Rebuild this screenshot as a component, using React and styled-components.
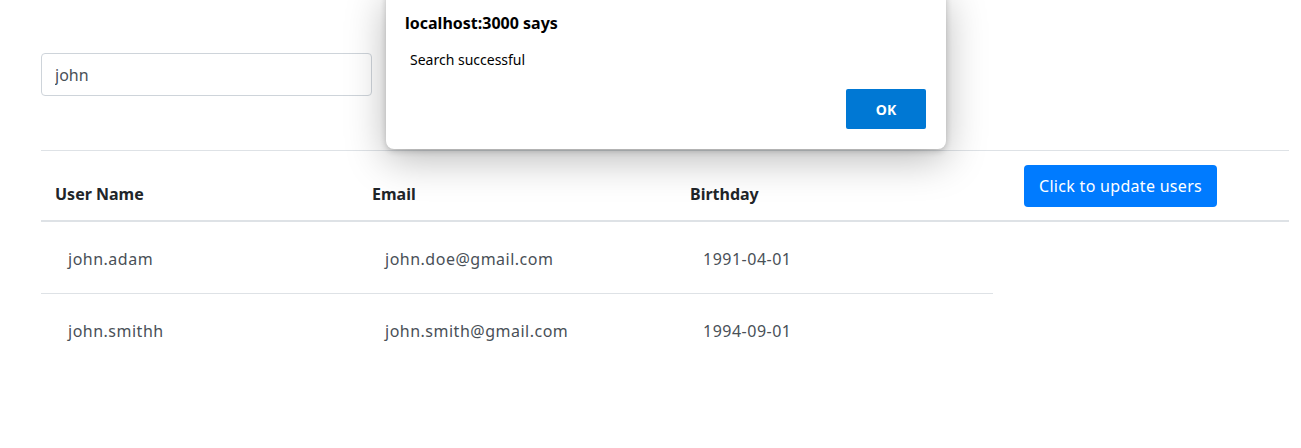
import React from "react"
import styled, { createGlobalStyle } from "styled-components"

const users = [
  { name: "john.adam", email: "john.doe@gmail.com", birthday: "1991-04-01" },
  { name: "john.smithh", email: "john.smith@gmail.com", birthday: "1994-09-01" },
]

function App() {
  return (
    <Page>
      <GlobalStyle />
      <SearchBar>
        <SearchInput defaultValue="john" />
      </SearchBar>
      <Table>
        <HeaderRow>
          <HeadCell>User Name</HeadCell>
          <HeadCell>Email</HeadCell>
          <HeadCell>Birthday</HeadCell>
          <ActionCell>
            <UpdateButton>Click to update users</UpdateButton>
          </ActionCell>
        </HeaderRow>
        {users.map((u, i) => (
          <BodyRow key={u.name} last={i === users.length - 1}>
            <Cell>{u.name}</Cell>
            <Cell>{u.email}</Cell>
            <Cell>{u.birthday}</Cell>
          </BodyRow>
        ))}
      </Table>
      <Alert>
        <AlertTitle>localhost:3000 says</AlertTitle>
        <AlertMessage>Search successful</AlertMessage>
        <AlertFooter>
          <OkButton>OK</OkButton>
        </AlertFooter>
      </Alert>
    </Page>
  )
}

export default App

const GlobalStyle = createGlobalStyle`
  body {
    margin: 0;
    background: #fff;
    font-family: "Noto Sans", "Open Sans", sans-serif;
  }
`

const Page = styled.div`
  position: relative;
  width: 1301px;
  height: 448px;
  overflow: hidden;
  padding: 53px 12px 0 41px;
  box-sizing: border-box;
`

const SearchBar = styled.div`
  display: flex;
  height: 97px;
`

const SearchInput = styled.input`
  width: 331px;
  height: 43px;
  box-sizing: border-box;
  border: 1px solid #ced4da;
  border-radius: 4px;
  padding: 0 13px;
  font-family: inherit;
  font-size: 16px;
  color: #495057;
  outline: none;
`

const Table = styled.div`
  display: flex;
  flex-direction: column;
`

const HeaderRow = styled.div`
  display: grid;
  grid-template-columns: 317px 318px 317px 1fr;
  height: 72px;
  border-top: 1px solid #dee2e6;
  border-bottom: 2px solid #dee2e6;
  box-sizing: border-box;
`

const HeadCell = styled.div`
  display: flex;
  align-items: center;
  padding: 16px 14px 0;
  font-size: 16px;
  font-weight: 700;
  color: #212529;
`

const ActionCell = styled.div`
  display: flex;
  align-items: center;
  padding: 0 0 0 31px;
`

const UpdateButton = styled.button`
  height: 42px;
  padding: 0 15px;
  border: none;
  border-radius: 4px;
  background: #007bff;
  color: #fff;
  font-family: inherit;
  font-size: 16px;
  letter-spacing: 0.3px;
  cursor: pointer;
`

const BodyRow = styled.div`
  display: grid;
  grid-template-columns: 317px 318px 317px;
  width: 952px;
  height: 71px;
  border-bottom: ${(p) => (p.last ? "none" : "1px solid #dee2e6")};
`

const Cell = styled.div`
  display: flex;
  align-items: center;
  padding: 2px 27px 0;
  font-size: 16px;
  letter-spacing: 0.5px;
  color: #495057;
`

const Alert = styled.div`
  position: absolute;
  left: 386px;
  top: -10px;
  width: 560px;
  height: 159px;
  box-sizing: border-box;
  padding: 22px 20px 20px 19px;
  background: #fff;
  border-radius: 8px;
  box-shadow: 0 10px 40px rgba(0, 0, 0, 0.28), 0 2px 6px rgba(0, 0, 0, 0.2);
  display: flex;
  flex-direction: column;
`

const AlertTitle = styled.div`
  font-size: 16px;
  font-weight: 700;
  color: #000;
  line-height: 22px;
`

const AlertMessage = styled.div`
  margin-top: 16px;
  padding-left: 5px;
  font-size: 14px;
  color: #000;
  line-height: 20px;
`

const AlertFooter = styled.div`
  margin-top: auto;
  display: flex;
  justify-content: flex-end;
`

const OkButton = styled.button`
  width: 80px;
  height: 40px;
  border: none;
  border-radius: 2px;
  background: #0078d4;
  color: #fff;
  font-family: inherit;
  font-size: 14px;
  font-weight: 700;
`
